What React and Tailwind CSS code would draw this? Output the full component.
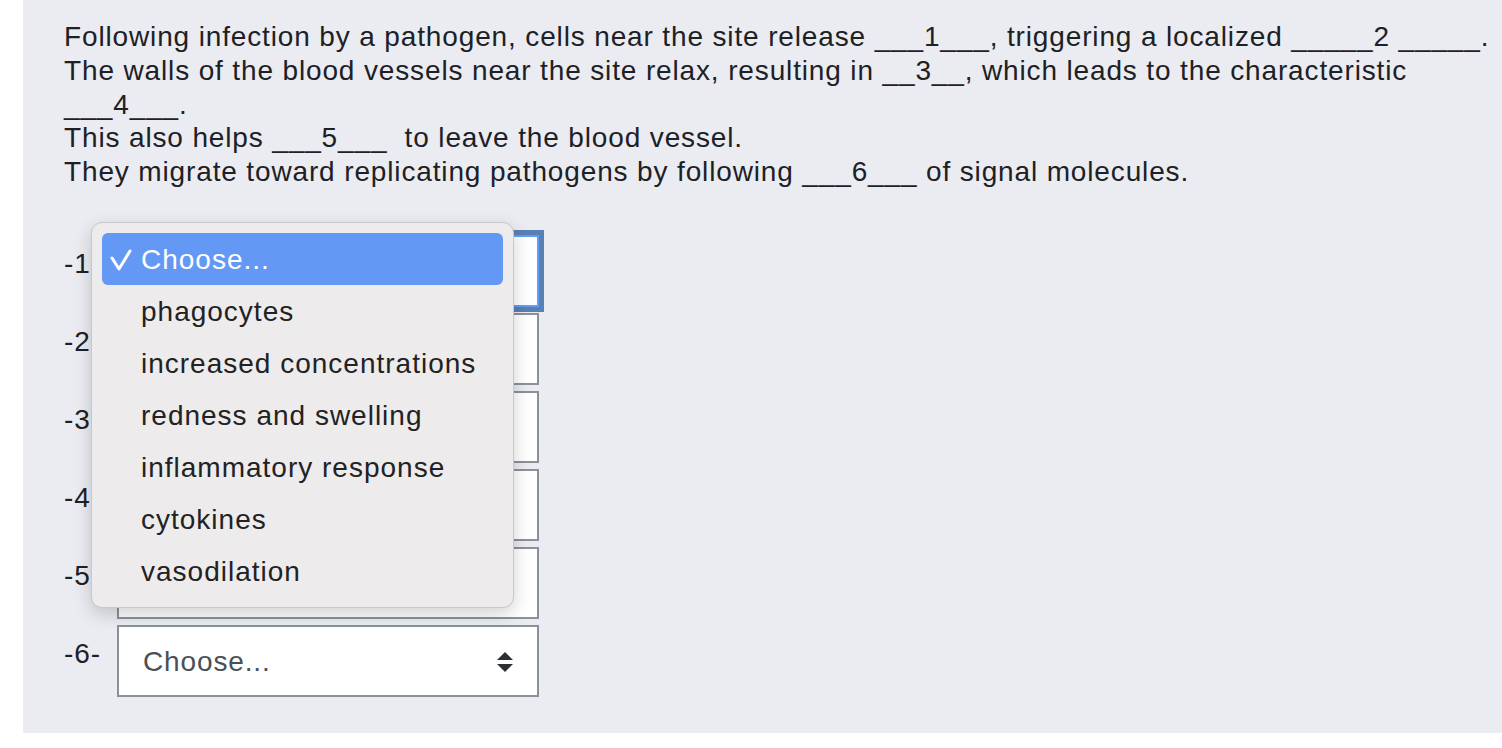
import { useState } from "react";

const options = [
  "phagocytes",
  "increased concentrations",
  "redness and swelling",
  "inflammatory response",
  "cytokines",
  "vasodilation",
];

const SelectArrows = () => (
  <svg width="16" height="20" viewBox="0 0 16 20" className="shrink-0">
    <polygon points="8,0 16,8 0,8" fill="#2b2f33" />
    <polygon points="0,12 16,12 8,20" fill="#2b2f33" />
  </svg>
);

const Check = () => (
  <svg width="22" height="22" viewBox="0 0 22 22" className="shrink-0">
    <polyline
      points="2,9 9,20 20,2"
      fill="none"
      stroke="white"
      strokeWidth="3"
      strokeLinecap="round"
      strokeLinejoin="round"
    />
  </svg>
);

const App = () => {
  const [open] = useState(true);
  const rows = [1, 2, 3, 4, 5, 6];

  return (
    <div
      className="min-h-[748px] bg-white"
      style={{ fontFamily: '"Liberation Sans", Arial, sans-serif' }}
    >
      <div className="ml-[23px] bg-[#ebecf1] pl-[41px] pt-[20px] pb-[36px] text-[28px] leading-[33.75px] tracking-[0.86px] text-[#1d2125]">
        <p className="whitespace-nowrap">
          Following infection by a pathogen, cells near the site release ___1___, triggering a localized _____2 _____.
          <br />
          The walls of the blood vessels near the site relax, resulting in __3__, which leads to the characteristic
          <br />
          ___4___.
          <br />
          This also helps ___5___&nbsp; to leave the blood vessel.
          <br />
          They migrate toward replicating pathogens by following ___6___ of signal molecules.
        </p>

        <div className="relative mt-[46px] flex flex-col gap-[6px]">
          {rows.map((n) => (
            <div key={n} className="flex items-start">
              <span className="mt-[12px] w-[53px] shrink-0">-{n}-</span>
              <div
                className={
                  n === 1
                    ? "flex h-[72px] w-[422px] items-center justify-between border-2 border-[#5e9ef7] bg-white pt-[3px] pl-[24px] pr-[24px] outline-[5px] outline-solid outline-[#5a7fb3]"
                    : "flex h-[72px] w-[422px] items-center justify-between border-2 border-[#8b9199] bg-white pt-[3px] pl-[24px] pr-[24px]"
                }
              >
                <span className="text-[#495057]">Choose...</span>
                <SelectArrows />
              </div>
            </div>
          ))}

          {open && (
            <div className="absolute left-[27px] top-[-13px] w-[423px] rounded-[11px] border border-[#c9c8c9] bg-[#edebec] px-[10px] pt-[10px] pb-[10px] tracking-[1px] shadow-[0_6px_18px_rgba(0,0,0,0.18)]">
              <div className="flex h-[52px] items-center gap-[9px] rounded-[6px] bg-[#6399f5] pt-[3px] pl-[8px] text-white">
                <Check />
                <span>Choose...</span>
              </div>
              {options.map((o) => (
                <div
                  key={o}
                  className="flex h-[52px] items-center pt-[3px] pl-[39px] text-[#222222]"
                >
                  {o}
                </div>
              ))}
            </div>
          )}
        </div>
      </div>
    </div>
  );
};

export default App;
